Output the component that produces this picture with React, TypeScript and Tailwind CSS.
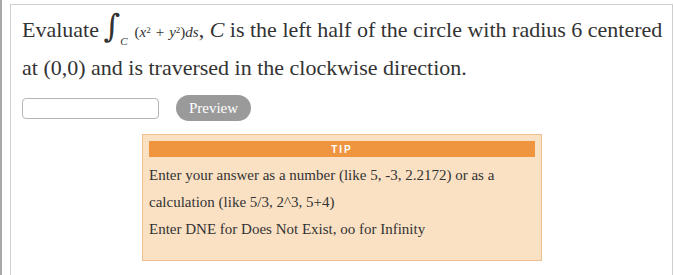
import React from "react";

export default function App() {
  return (
    <div className="w-[674px] h-[275px] overflow-hidden bg-white border-l-2 border-[#a8a8a8] pl-[8px] pt-[4px]">
      <div className="h-[300px] w-[663px] border-l border-t border-r border-[#cfcfcf] pl-[11px] pt-[6px] text-[#333]" style={{ fontFamily: '"Liberation Serif", "Times New Roman", serif' }}>
        <div className="text-[22px] leading-[38px]">
          <div className="whitespace-nowrap h-[38px]">
            <span>Evaluate </span>
            <span className="text-[32px] leading-[0] ml-[-1px]" style={{ fontFamily: '"DejaVu Serif", serif' }}>∫</span>
            <span className="text-[11px] leading-[0] italic align-[-8px]">C</span>
            <span className="text-[15px] leading-[0] ml-[7px]">(<i>x</i><sup className="text-[9px] leading-[0]">2</sup><span className="mx-[5px]">+</span><i>y</i><sup className="text-[9px] leading-[0]">2</sup>)<i>ds</i></span>
            <span>, <i>C</i> is the left half of the circle with radius 6 centered</span>
          </div>
          <div className="h-[38px]">at (0,0) and is traversed in the clockwise direction.</div>
        </div>
        <div className="flex items-center mt-[8px]">
          <div className="w-[137px] h-[21px] border border-[#b5b5b5] rounded-[4px]" />
          <div className="ml-[17px] w-[75px] h-[26px] rounded-full bg-[#9a9a9a] text-white text-[15px] flex items-center justify-center">Preview</div>
        </div>
        <div className="ml-[120px] mt-[13px] w-[400px] h-[127px] border border-[#ecc08f] bg-[#fae1c4] px-[6px] pt-[6px]">
          <div className="h-[16px] bg-[#f0953f] text-white text-[10px] font-bold tracking-[2px] flex items-center justify-center" style={{ fontFamily: '"Liberation Sans", Arial, sans-serif' }}>TIP</div>
          <div className="text-[15px] leading-[27px] mt-[5px] text-[#333]">
            <div>Enter your answer as a number (like 5, -3, 2.2172) or as a</div>
            <div>calculation (like 5/3, 2^3, 5+4)</div>
            <div>Enter DNE for Does Not Exist, oo for Infinity</div>
          </div>
        </div>
      </div>
    </div>
  );
}
